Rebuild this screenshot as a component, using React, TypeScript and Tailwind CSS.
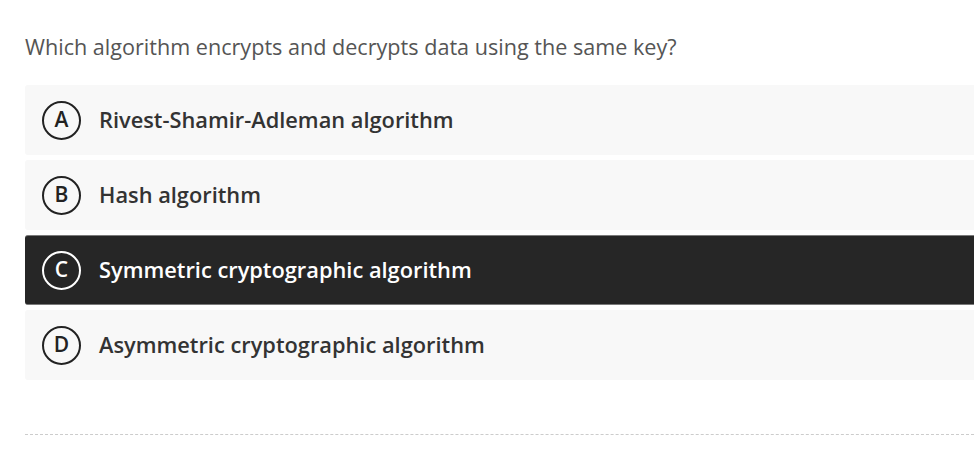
import React from "react";

const options = [
  { letter: "A", text: "Rivest-Shamir-Adleman algorithm", selected: false },
  { letter: "B", text: "Hash algorithm", selected: false },
  { letter: "C", text: "Symmetric cryptographic algorithm", selected: true },
  { letter: "D", text: "Asymmetric cryptographic algorithm", selected: false },
];

export default function App() {
  return (
    <div className="w-[974px] h-[475px] overflow-hidden bg-white" style={{ fontFamily: '"Open Sans", "Noto Sans", sans-serif' }}>
      <div className="pl-[25px] pt-[32px]">
        <p className="text-[21.6px] leading-[30px] text-[#555555]">Which algorithm encrypts and decrypts data using the same key?</p>
        <div className="mt-[23px] flex flex-col gap-[5px]">
          {options.map((o) => (
            <div
              key={o.letter}
              className={
                o.selected
                  ? "h-[70px] flex items-center bg-[#262626] border-y border-[#7a7a7a] rounded-l-[3px]"
                  : "h-[70px] flex items-center bg-[#f8f8f8] rounded-l-[3px]"
              }
            >
              <div
                className={
                  o.selected
                    ? "ml-[17px] w-[39px] h-[39px] shrink-0 rounded-full border-[2.5px] border-white flex items-center justify-center text-white text-[21px] font-semibold"
                    : "ml-[17px] w-[39px] h-[39px] shrink-0 rounded-full border-[2.5px] border-[#222222] flex items-center justify-center text-[#222222] text-[21px] font-semibold"
                }
              >
                {o.letter}
              </div>
              <span
                className={
                  o.selected
                    ? "ml-[18px] text-[21.8px] text-white font-semibold"
                    : "ml-[18px] text-[21.8px] text-[#333333] font-semibold"
                }
              >
                {o.text}
              </span>
            </div>
          ))}
        </div>
        <div className="mt-[54px] border-t border-dashed border-[#cccccc]" />
      </div>
    </div>
  );
}
